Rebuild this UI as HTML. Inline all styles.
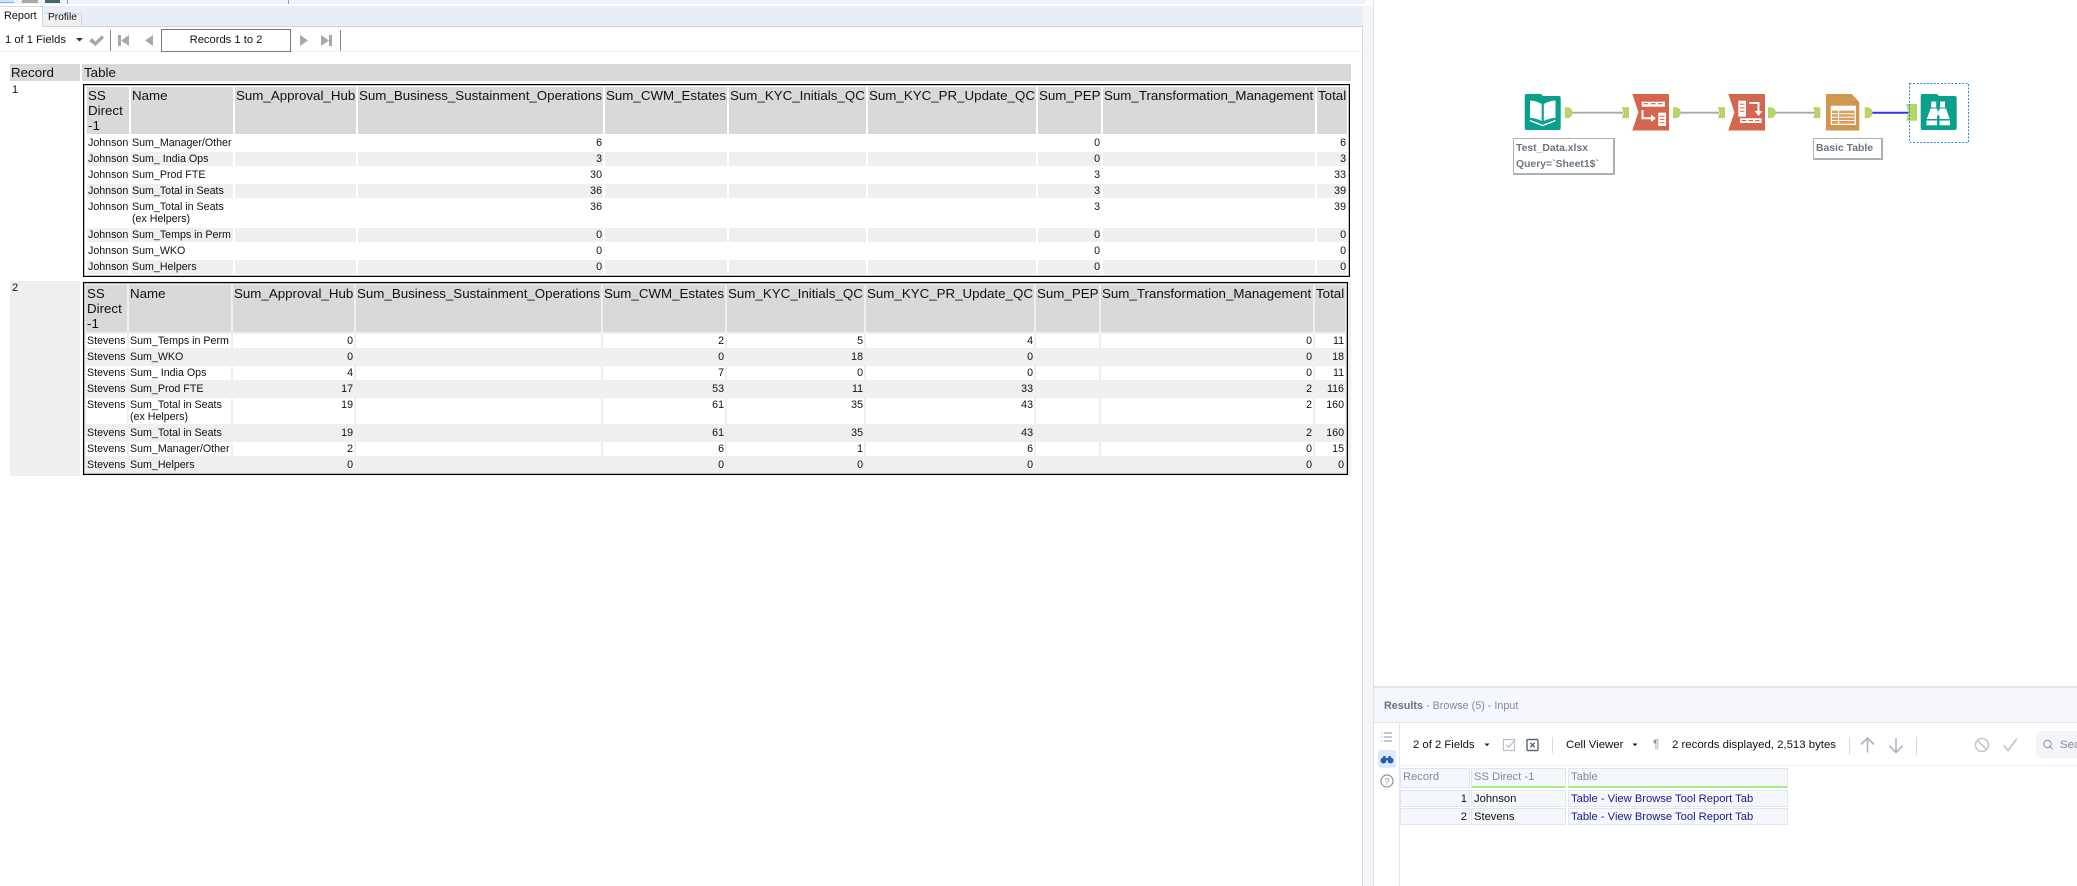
<!DOCTYPE html>
<html><head><meta charset="utf-8"><title>Browse</title>
<style>
html,body{margin:0;padding:0;background:#fff}
body{position:relative;width:2077px;height:886px;overflow:hidden;font-family:"Liberation Sans",sans-serif;color:#111}
.a{position:absolute;white-space:nowrap}
.box{position:absolute;box-sizing:border-box;border:1px solid #000;box-shadow:inset 0 0 0 1px rgba(0,0,0,.25)}
table.t{position:absolute;border-collapse:separate;border-spacing:2px;table-layout:fixed;font-size:10.67px;line-height:12px}
table.t td,table.t th{box-sizing:border-box;padding:1px;vertical-align:top;overflow:visible;white-space:nowrap;text-align:right;font-weight:normal}
table.t th{background:#d9d9d9;font-size:13.33px;line-height:15px;text-align:left;height:47px}
table.t td:nth-child(1),table.t td:nth-child(2){text-align:left}
table.t tr:first-child th{background:#d9d9d9}
table.t.w tr:nth-child(even) td{background:#fff}
table.t.w tr:nth-child(odd) td{background:#efefef}
.g{position:absolute;box-sizing:border-box;background:#f5f7fc;border:1px solid #dfe5f1;font-size:11.2px;line-height:16px;padding:0 2px;white-space:nowrap}
.lnk{color:#1a1a8c}
</style></head><body>

<!-- top strip -->
<div class="a" style="left:0;top:0;width:1365px;height:4px;background:#eff2fa"></div>
<div class="a" style="left:0;top:0;width:14px;height:3px;background:#cfe3fb;border-bottom:1px solid #7fb4ea;box-sizing:border-box"></div>
<div class="a" style="left:22px;top:0;width:16px;height:3px;background:#a9a9a9"></div>
<div class="a" style="left:45px;top:0;width:15px;height:3px;background:#3f6a66"></div>
<div class="a" style="left:67px;top:0;width:1px;height:4px;background:#999"></div>
<div class="a" style="left:288px;top:0;width:1px;height:4px;background:#999"></div>
<div class="a" style="left:0;top:6px;width:1365px;height:20px;background:#e9edf8"></div>
<div class="a" style="left:0;top:26px;width:1362px;height:1px;background:#cfd1d6"></div>
<div class="a" style="left:0;top:6px;width:43px;height:21px;background:#fff;border:1px solid #d5d8de;border-left:0;border-bottom:0;box-sizing:border-box"></div>
<div class="a" style="left:44px;top:13px;width:38px;height:13px;background:#f0f0f0;border:1px solid #d5d8de;border-bottom:0;border-left:0;box-sizing:border-box"></div>
<div class="a" style="left:4px;top:9px;font-size:10.9px;line-height:14px">Report</div>
<div class="a" style="left:48px;top:11px;font-size:10.2px;line-height:14px">Profile</div>

<!-- right of the left panel -->
<div class="a" style="left:1362px;top:26px;width:1px;height:860px;background:#d8dadf"></div>
<div class="a" style="left:1363px;top:6px;width:11px;height:880px;background:#f3f5fb"></div>
<div class="a" style="left:1373px;top:0;width:1px;height:886px;background:#dde2ee"></div>

<!-- report toolbar -->
<div class="a" style="left:0;top:51px;width:1362px;height:1px;background:#f0f0f0"></div>
<div class="a" style="left:5px;top:33px;font-size:11.2px;line-height:14px">1 of 1 Fields</div>
<svg class="a" style="left:0;top:26px" width="350" height="28" viewBox="0 26 350 28">
<path d="M76 38h7l-3.500 3.500z" fill="#333"/>
<path d="M89 41l3-3 3.500 3.500L102 35l2 3-8.500 8z" fill="#a8a8a8"/>
<rect x="110" y="30" width="1" height="21" fill="#888"/>
<path d="M118 35h3v11h-3zM129 35v11l-8-5.500z" fill="#a8a8a8"/>
<path d="M153 35v11l-8-5.500z" fill="#a8a8a8"/>
<path d="M300 35v11l8-5.500z" fill="#a8a8a8"/>
<path d="M321 35v11l8-5.500zM329 35h3v11h-3z" fill="#a8a8a8"/>
<rect x="340" y="30" width="1" height="21" fill="#888"/>
</svg>
<div class="a" style="left:161px;top:29px;width:130px;height:23px;box-sizing:border-box;border:1px solid #777;text-align:center;font-size:11.2px;line-height:20px;background:#fff">Records 1 to 2</div>

<!-- report table outer -->
<div class="a" style="left:10px;top:64px;width:70px;height:17px;background:#d9d9d9;font-size:13.33px;line-height:17px;padding-left:1px;box-sizing:border-box">Record</div>
<div class="a" style="left:82px;top:64px;width:1269px;height:17px;background:#d9d9d9;font-size:13.33px;line-height:17px;padding-left:2px;box-sizing:border-box">Table</div>
<div class="a" style="left:12px;top:84px;font-size:11px;line-height:12px">1</div>
<div class="a" style="left:10px;top:281px;width:70px;height:195px;background:#efefef"></div>
<div class="a" style="left:82px;top:281px;width:1269px;height:195px;background:#efefef"></div>
<div class="a" style="left:12px;top:282px;font-size:11px;line-height:12px">2</div>

<div class="box" style="left:83px;top:84px;width:1267px;height:193px"></div>
<table class="t w" style="left:85px;top:85px;width:1264px">
<colgroup><col style="width:42px"><col style="width:102px"><col style="width:121px"><col style="width:245px"><col style="width:122px"><col style="width:137px"><col style="width:168px"><col style="width:63px"><col style="width:212px"><col style="width:30px"></colgroup>
<tr><th>SS<br>Direct<br>-1</th><th>Name</th><th>Sum_Approval_Hub</th><th>Sum_Business_Sustainment_Operations</th><th>Sum_CWM_Estates</th><th>Sum_KYC_Initials_QC</th><th>Sum_KYC_PR_Update_QC</th><th>Sum_PEP</th><th>Sum_Transformation_Management</th><th>Total</th></tr>
<tr><td>Johnson</td><td>Sum_Manager/Other</td><td></td><td>6</td><td></td><td></td><td></td><td>0</td><td></td><td>6</td></tr>
<tr><td>Johnson</td><td>Sum_ India Ops</td><td></td><td>3</td><td></td><td></td><td></td><td>0</td><td></td><td>3</td></tr>
<tr><td>Johnson</td><td>Sum_Prod FTE</td><td></td><td>30</td><td></td><td></td><td></td><td>3</td><td></td><td>33</td></tr>
<tr><td>Johnson</td><td>Sum_Total in Seats</td><td></td><td>36</td><td></td><td></td><td></td><td>3</td><td></td><td>39</td></tr>
<tr><td>Johnson</td><td>Sum_Total in Seats<br>(ex Helpers)</td><td></td><td>36</td><td></td><td></td><td></td><td>3</td><td></td><td>39</td></tr>
<tr><td>Johnson</td><td>Sum_Temps in Perm</td><td></td><td>0</td><td></td><td></td><td></td><td>0</td><td></td><td>0</td></tr>
<tr><td>Johnson</td><td>Sum_WKO</td><td></td><td>0</td><td></td><td></td><td></td><td>0</td><td></td><td>0</td></tr>
<tr><td>Johnson</td><td>Sum_Helpers</td><td></td><td>0</td><td></td><td></td><td></td><td>0</td><td></td><td>0</td></tr>
</table>

<div class="box" style="left:83px;top:282px;width:1265px;height:193px"></div>
<table class="t w" style="left:84px;top:283px;width:1263px">
<colgroup><col style="width:41px"><col style="width:102px"><col style="width:121px"><col style="width:245px"><col style="width:122px"><col style="width:137px"><col style="width:168px"><col style="width:63px"><col style="width:212px"><col style="width:30px"></colgroup>
<tr><th>SS<br>Direct<br>-1</th><th>Name</th><th>Sum_Approval_Hub</th><th>Sum_Business_Sustainment_Operations</th><th>Sum_CWM_Estates</th><th>Sum_KYC_Initials_QC</th><th>Sum_KYC_PR_Update_QC</th><th>Sum_PEP</th><th>Sum_Transformation_Management</th><th>Total</th></tr>
<tr><td>Stevens</td><td>Sum_Temps in Perm</td><td>0</td><td></td><td>2</td><td>5</td><td>4</td><td></td><td>0</td><td>11</td></tr>
<tr><td>Stevens</td><td>Sum_WKO</td><td>0</td><td></td><td>0</td><td>18</td><td>0</td><td></td><td>0</td><td>18</td></tr>
<tr><td>Stevens</td><td>Sum_ India Ops</td><td>4</td><td></td><td>7</td><td>0</td><td>0</td><td></td><td>0</td><td>11</td></tr>
<tr><td>Stevens</td><td>Sum_Prod FTE</td><td>17</td><td></td><td>53</td><td>11</td><td>33</td><td></td><td>2</td><td>116</td></tr>
<tr><td>Stevens</td><td>Sum_Total in Seats<br>(ex Helpers)</td><td>19</td><td></td><td>61</td><td>35</td><td>43</td><td></td><td>2</td><td>160</td></tr>
<tr><td>Stevens</td><td>Sum_Total in Seats</td><td>19</td><td></td><td>61</td><td>35</td><td>43</td><td></td><td>2</td><td>160</td></tr>
<tr><td>Stevens</td><td>Sum_Manager/Other</td><td>2</td><td></td><td>6</td><td>1</td><td>6</td><td></td><td>0</td><td>15</td></tr>
<tr><td>Stevens</td><td>Sum_Helpers</td><td>0</td><td></td><td>0</td><td>0</td><td>0</td><td></td><td>0</td><td>0</td></tr>
</table>

<!-- workflow canvas -->
<svg class="a" style="left:1500px;top:80px" width="500" height="70" viewBox="1500 80 500 70">
<g stroke="#a9a9a9" stroke-width="1.8" fill="none">
<path d="M1571 112.700H1623M1679 112.700H1719M1775 112.700H1815"/>
</g>
<path d="M1871 112.700H1909" stroke="#3535e0" stroke-width="2" fill="none"/>
<g fill="#b7d566">
<path d="M1564.700 107.300h3.800q4 1.500 4 5.400t-4 5.400h-3.800z"/>
<path d="M1673 107.300h3.800q4 1.500 4 5.400t-4 5.400H1673z"/>
<path d="M1768 107.300h3.800q4 1.500 4 5.400t-4 5.400H1768z"/>
<path d="M1864.700 107.300h3.800q4 1.500 4 5.400t-4 5.400h-3.800z"/>
<path d="M1621.700 107.300h7.300v10.800h-7.300l2-5.400z"/>
<path d="M1717.700 107.300h7.300v10.800h-7.300l2-5.400z"/>
<path d="M1813 107.300h7.300v10.800H1813l2-5.400z"/>
<path d="M1906 104h11v16.700h-11l2.500-8.300z"/>
</g>
<!-- input tool -->
<path d="M1526.700 94H1541l2 2h15.700a2 2 0 0 1 2 2v30a2 2 0 0 1-2 2h-32a2 2 0 0 1-2-2V96a2 2 0 0 1 2-2z" fill="#0ba08d"/>
<path d="M1530 100.500q6 .2 11.700 3.500V121q-5.700-3-11.700-3.300zM1555.500 100.500q-6 .2-11.700 3.500V121q5.700-3 11.700-3.300z" fill="#fff"/>
<path d="M1530 120.500l12.700 5 12.800-5" stroke="#fff" stroke-width="1.300" fill="none"/>
<!-- tool 2 -->
<path d="M1632.300 94H1669v36.500h-36.700l6.200-18.200z" fill="#d4654f"/>
<rect x="1641.700" y="101.700" width="23.300" height="5" fill="#fff"/>
<path d="M1643.500 103.700h4.800M1650.800 103.700h4.800M1658 103.700h4.800" stroke="#d4654f" stroke-width="1.100"/>
<path d="M1642.500 110v8.200h9" stroke="#fff" stroke-width="2" fill="none"/>
<path d="M1651 114.500l5 3.700-5 3.700z" fill="#fff"/>
<rect x="1658.300" y="112.700" width="7.700" height="13.300" fill="#fff"/>
<path d="M1659.800 116.200h4.700M1659.800 119.400h4.700M1659.800 122.700h4.700" stroke="#d4654f" stroke-width="1"/>
<!-- tool 3 -->
<path d="M1728.300 94H1765v36.500h-36.700l6.200-18.200z" fill="#d4654f"/>
<rect x="1738.300" y="100.700" width="7.700" height="16" fill="#fff"/>
<path d="M1739.800 104.200h4.700M1739.800 107.800h4.700M1739.800 111.300h4.700" stroke="#d4654f" stroke-width="1"/>
<path d="M1749.300 103h9.200v9" stroke="#fff" stroke-width="2" fill="none"/>
<path d="M1754.700 111h7.600l-3.800 5z" fill="#fff"/>
<rect x="1740" y="118.300" width="21.700" height="4.700" fill="#fff"/>
<path d="M1741.800 120.600h4.500M1748.500 120.600h4.500M1755 120.600h4.500" stroke="#d4654f" stroke-width="1.100"/>
<!-- table tool -->
<path d="M1826 94h25.700l7.600 8v28.500H1826z" fill="#d09650"/>
<rect x="1830.700" y="105.700" width="25.300" height="19.300" fill="#fff"/>
<path d="M1832 110.600h22.700v13.200H1832z" fill="#d99f5c"/>
<path d="M1832 113.800h22.700M1832 117.100h22.700M1832 120.500h22.700M1838.500 110.600v13.200" stroke="#fff" stroke-width="1"/>
<!-- browse tool -->
<path d="M1922.700 94H1937l2 2h15.700a2 2 0 0 1 2 2v30a2 2 0 0 1-2 2h-32a2 2 0 0 1-2-2V96a2 2 0 0 1 2-2z" fill="#0ba08d"/>
<g fill="#fff">
<path d="M1931.200 101.500h5v6h-5zM1940 101.500h5v6h-5z"/>
<path d="M1930.500 108.500h6.500v10.500h-10.200zM1939.500 108.500h6.500l3.700 10.500h-10.200z"/>
<path d="M1926.500 120.500H1937v4.700h-10.500zM1939.500 120.500H1950v4.700h-10.500z"/>
<rect x="1937" y="110.500" width="2.500" height="5" opacity=".85"/>
</g>
<rect x="1909.500" y="83.500" width="59" height="59" fill="none" stroke="#2a8ae0" stroke-width="1" stroke-dasharray="2 1.500"/>
</svg>

<div class="a" style="left:1513px;top:138px;width:102px;height:37px;box-sizing:border-box;background:#fff;border:1px solid #b0b0b0;border-right-width:2px;border-bottom-width:2px;font-size:10.4px;font-weight:bold;line-height:15.500px;padding:2px 0 0 2px;color:#6b7681">Test_Data.xlsx<br>Query=`Sheet1$`</div>
<div class="a" style="left:1813px;top:138px;width:70px;height:22px;box-sizing:border-box;background:#fff;border:1px solid #b0b0b0;border-right-width:2px;border-bottom-width:2px;font-size:10.4px;font-weight:bold;line-height:15.500px;padding:2px 0 0 2px;color:#6b7681">Basic Table</div>

<!-- results panel -->
<div class="a" style="left:1374px;top:686px;width:703px;height:37px;background:#f5f7fc;border-top:2px solid #dfe4ef;border-bottom:1px solid #dfe4ef;box-sizing:border-box"></div>
<div class="a" style="left:1384px;top:699px;font-size:10.8px;line-height:14px;color:#7f8a99"><b style="color:#67717f">Results</b> - Browse (5) - Input</div>
<div class="a" style="left:1399px;top:723px;width:1px;height:163px;background:#e3e7f0"></div>
<div class="a" style="left:1399px;top:765px;width:678px;height:1px;background:#eef1f7"></div>
<div class="a" style="left:1378px;top:750px;width:18px;height:18px;background:#dcebfb;border-radius:3px"></div>
<svg class="a" style="left:1374px;top:724px" width="26" height="70" viewBox="1374 724 26 70">
<path d="M1384 733h8M1384 737h8M1384 741h8" stroke="#8a93a3" stroke-width="1.100"/>
<path d="M1381.500 733h1M1381.500 737h1M1381.500 741h1" stroke="#8a93a3" stroke-width="1.100"/>
<circle cx="1383.500" cy="760.500" r="3" fill="#2d5fa8"/><circle cx="1390.500" cy="760.500" r="3" fill="#2d5fa8"/>
<path d="M1382 759l1.500-3h2l.5 3zM1388 759l.5-3h2l1.500 3zM1386 758h2v2h-2z" fill="#2d5fa8"/>
<circle cx="1387" cy="781" r="6" fill="none" stroke="#8a93a3" stroke-width="1.200"/>
<text x="1387" y="784.500" font-size="9" text-anchor="middle" fill="#8a93a3" font-family="Liberation Sans">?</text>
</svg>

<div class="a" style="left:1413px;top:738px;font-size:11.3px;line-height:14px">2 of 2 Fields</div>
<div class="a" style="left:1566px;top:738px;font-size:11.4px;line-height:14px">Cell Viewer</div>
<div class="a" style="left:1672px;top:738px;font-size:11.4px;line-height:14px">2 records displayed, 2,513 bytes</div>
<div class="a" style="left:1653px;top:737px;font-size:12px;line-height:14px;color:#8a93a3">¶</div>
<div class="a" style="left:2036px;top:731px;width:41px;height:27px;background:#f3f5fa;border-radius:4px 0 0 4px"></div>
<div class="a" style="left:2060px;top:738px;font-size:11.4px;line-height:14px;color:#7f8a99">Sea</div>
<svg class="a" style="left:1480px;top:730px" width="597" height="30" viewBox="1480 730 597 30">
<path d="M1484.500 743.500h5l-2.500 2.700zM1632.500 743.500h5l-2.500 2.700z" fill="#222"/>
<rect x="1503.500" y="739.500" width="11" height="11" fill="none" stroke="#b9bfca" stroke-width="1.200"/>
<path d="M1506 745l2.500 2.500 6-7" fill="none" stroke="#b9bfca" stroke-width="1.200"/>
<rect x="1527" y="739.500" width="11" height="11" rx="1" fill="none" stroke="#5b6678" stroke-width="1.400"/>
<path d="M1530.300 742.800l4.400 4.400M1534.700 742.800l-4.400 4.400" stroke="#5b6678" stroke-width="1.400"/>
<rect x="1552" y="737" width="1" height="16" fill="#d5d9e2"/>
<rect x="1849" y="737" width="1" height="18" fill="#d5d9e2"/>
<rect x="1916" y="737" width="1" height="18" fill="#d5d9e2"/>
<path d="M1867.500 752.500v-14M1861 744.500l6.500-6.500 6.500 6.500" fill="none" stroke="#aeb4bf" stroke-width="1.600"/>
<path d="M1896 738v14M1889.500 746l6.500 6.500 6.500-6.500" fill="none" stroke="#aeb4bf" stroke-width="1.600"/>
<circle cx="1982" cy="745" r="6.500" fill="none" stroke="#c3c7cf" stroke-width="1.600"/>
<path d="M1977.500 740.500l9 9" stroke="#c3c7cf" stroke-width="1.600"/>
<path d="M2003.500 745.500l4.500 5 9-12" fill="none" stroke="#c3c7cf" stroke-width="1.800"/>
<circle cx="2047.500" cy="744" r="3.700" fill="none" stroke="#8a93a3" stroke-width="1"/>
<path d="M2050.300 746.800l2.500 2.500" stroke="#8a93a3" stroke-width="1"/>
</svg>

<!-- results grid -->
<div class="g" style="left:1400px;top:768px;width:70px;height:20px;color:#7f8a99;line-height:17px">Record</div>
<div class="g" style="left:1471px;top:768px;width:95px;height:20px;color:#7f8a99;line-height:17px;border-bottom:2px solid #a3ef84">SS Direct -1</div>
<div class="g" style="left:1568px;top:768px;width:220px;height:20px;color:#7f8a99;line-height:17px;border-bottom:2px solid #a3ef84">Table</div>
<div class="g" style="left:1400px;top:790px;width:70px;height:17px;text-align:right">1</div>
<div class="g" style="left:1471px;top:790px;width:95px;height:17px">Johnson</div>
<div class="g lnk" style="left:1568px;top:790px;width:220px;height:17px">Table - View Browse Tool Report Tab</div>
<div class="g" style="left:1400px;top:808px;width:70px;height:17px;text-align:right">2</div>
<div class="g" style="left:1471px;top:808px;width:95px;height:17px">Stevens</div>
<div class="g lnk" style="left:1568px;top:808px;width:220px;height:17px">Table - View Browse Tool Report Tab</div>

</body></html>
